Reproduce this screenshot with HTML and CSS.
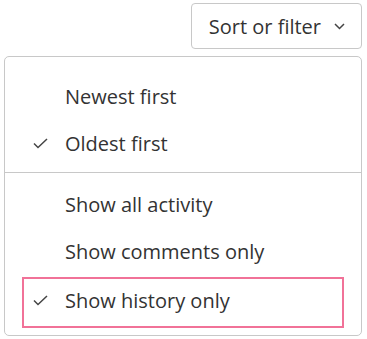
FILE: index.html
```html
<!DOCTYPE html>
<html lang="en">
<head>
    <meta charset="UTF-8">
    <meta name="viewport" content="width=device-width, initial-scale=1.0">
    <title>Sort or filter</title>
    <link rel="stylesheet" href="styles.css">
</head>
<body>

<div class="toolbar">
    <button class="sort-button">
        <span>Sort or filter</span>
        <svg class="chevron" width="11" height="7" viewBox="0 0 11 7">
            <path d="M1 1 L5.5 5.5 L10 1" fill="none" stroke="#444" stroke-width="1.5"/>
        </svg>
    </button>
</div>

<div class="menu">
    <div class="menu-group">
        <div class="menu-item"><span class="check"></span>Newest first</div>
        <div class="menu-item"><span class="check">
            <svg width="15" height="11" viewBox="0 0 15 11"><path d="M1 5.5 L5 9.5 L14 1" fill="none" stroke="#444" stroke-width="1.5"/></svg>
        </span>Oldest first</div>
    </div>
    <div class="menu-group">
        <div class="menu-item"><span class="check"></span>Show all activity</div>
        <div class="menu-item"><span class="check"></span>Show comments only</div>
        <div class="menu-item selected"><span class="check">
            <svg width="15" height="11" viewBox="0 0 15 11"><path d="M1 5.5 L5 9.5 L14 1" fill="none" stroke="#444" stroke-width="1.5"/></svg>
        </span>Show history only</div>
    </div>
</div>

</body>
</html>
```

FILE: styles.css
```css
body {
    font-family: "Open Sans", Arial, sans-serif;
    margin: 0;
    background-color: #ffffff;
    color: #333333;
}
.toolbar {
    display: flex;
    justify-content: flex-end;
    padding: 3px 5px 0 0;
}
.sort-button {
    display: flex;
    align-items: center;
    gap: 13px;
    height: 46px;
    padding: 0 16px 0 17px;
    background-color: #ffffff;
    border: 1px solid #c8c8c8;
    border-radius: 4px;
    font-family: inherit;
    font-size: 20px;
    color: #333333;
}
.chevron {
    display: block;
}
.menu {
    margin: 7px 5px 0 4px;
    border: 1px solid #c8c8c8;
    border-radius: 5px;
    padding: 16px 0 7px;
}
.menu-group {
    padding: 0 17px;
}
.menu-group + .menu-group {
    border-top: 1px solid #c8c8c8;
    margin-top: 5px;
    padding-top: 8px;
}
.menu-item {
    display: flex;
    align-items: center;
    height: 47px;
    font-size: 20px;
    box-sizing: border-box;
    border: 2px solid transparent;
}
.menu-item.selected {
    border-color: #f17298;
    height: 51px;
    margin-top: 2px;
    padding-bottom: 5px;
}
.check {
    width: 41px;
    padding-left: 9px;
    box-sizing: border-box;
    display: flex;
}
.check svg {
    display: block;
}
```
